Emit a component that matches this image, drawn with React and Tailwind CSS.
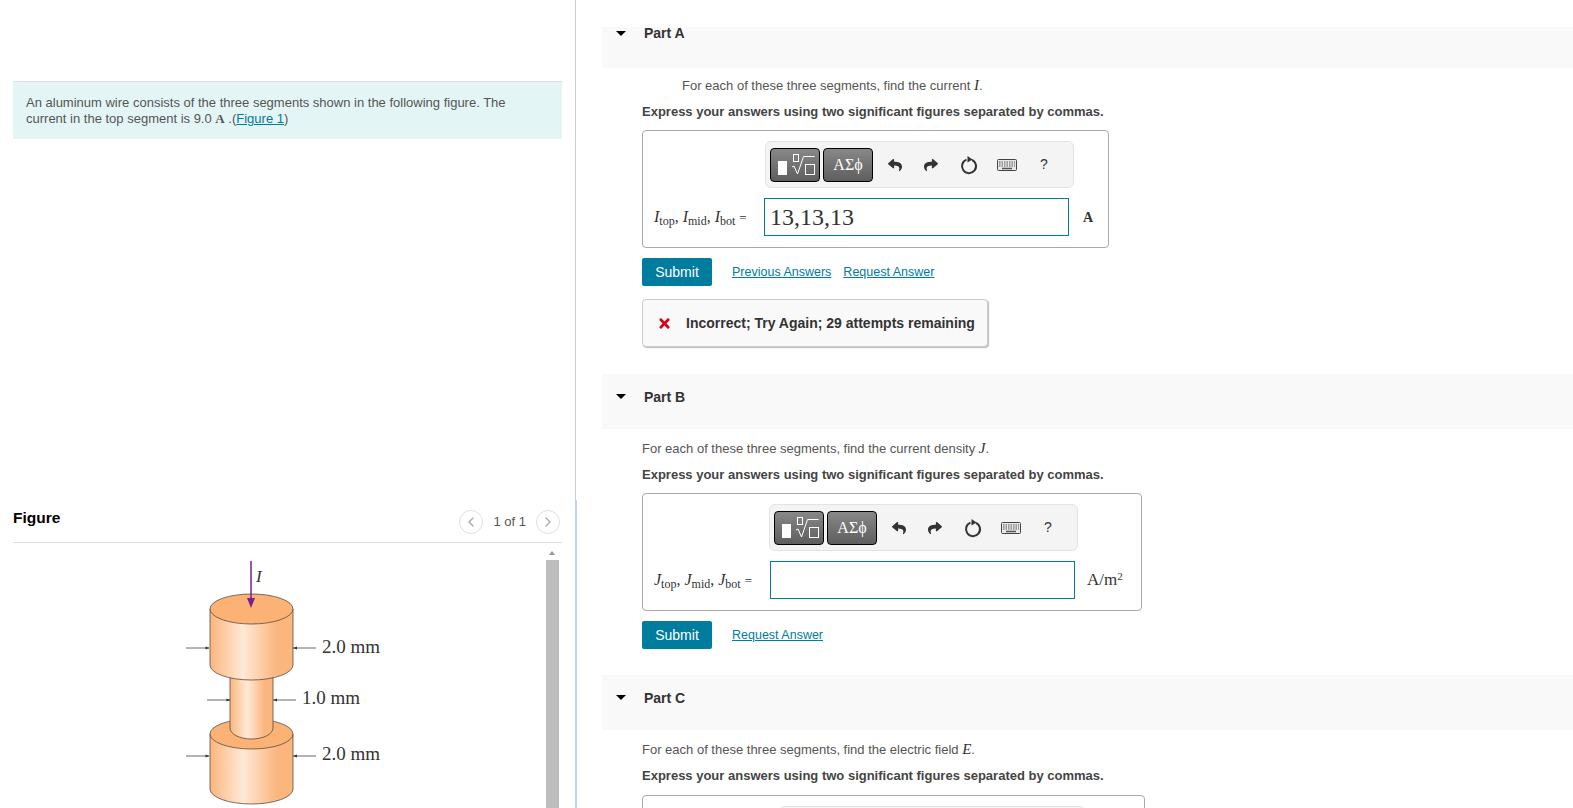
import { ChevronLeft, ChevronRight } from 'lucide-react';
import { FaReply, FaShare, FaTimes } from 'react-icons/fa';

function Var({ children }) {
  return <i className="font-['Liberation_Serif',serif] text-[15px] text-[#333]">{children}</i>;
}

function Caret() {
  return <div className="w-0 h-0 border-x-[5px] border-t-[5px] border-x-transparent border-t-black" />;
}

function PartHeader({ title, h, pt, mt, titleMt = '' }) {
  return (
    <div className={`flex items-start bg-[#f9f9f9] pl-[14px] ${h} ${pt} ${mt}`}>
      <div className="mt-[4px]"><Caret /></div>
      <span className={`ml-[18px] text-[14px] leading-[15px] font-bold text-[#333] ${titleMt}`}>{title}</span>
    </div>
  );
}

function Keyboard() {
  return (
    <svg width="20" height="12" viewBox="0 0 20 12">
      <rect x="0.5" y="0.5" width="19" height="11" rx="1" fill="#e8e8e8" stroke="#444" />
      <path d="M2 3h16M2 5h16M2 7h16" stroke="#555" strokeWidth="1" strokeDasharray="1.5 1" />
      <path d="M5 9.5h10" stroke="#555" strokeWidth="1.5" />
    </svg>
  );
}

function Reset() {
  return (
    <svg width="18" height="20" viewBox="0 0 18 20" fill="none">
      <path d="M6.5 4.6A7 7 0 1 0 12 4.8" stroke="#333" strokeWidth="2" />
      <path d="M7.5 1l5 3.5-5 3z" fill="#333" />
    </svg>
  );
}

function Toolbar({ mt }) {
  return (
    <div className={`flex items-center w-[309px] h-[47px] rounded-[6px] border border-[#e2e2e2] bg-[#f4f4f4] pl-[4px] ${mt}`}>
      <div className="flex items-center w-[50px] h-[34px] rounded-[4px] border border-black bg-gradient-to-b from-[#888] to-[#5e5e5e] pl-[7px] gap-[4px]">
        <div className="w-[9px] h-[14px] bg-white mt-[6px]" />
        <svg width="24" height="26" viewBox="0 0 24 26" fill="none" stroke="#fff" strokeWidth="1">
          <rect x="2.5" y="2.5" width="5" height="7" />
          <path d="M1 15l2-1 3.5 8 6-17.5h11" />
          <rect x="14.5" y="12.5" width="9" height="10" />
        </svg>
      </div>
      <div className="flex items-center justify-center w-[50px] h-[34px] ml-[3px] rounded-[4px] border border-black bg-gradient-to-b from-[#888] to-[#5e5e5e] font-['Liberation_Serif',serif] text-[16px] text-white">
        ΑΣϕ
      </div>
      <FaReply className="ml-[15px] text-[14px] text-[#333]" />
      <FaShare className="ml-[22px] text-[14px] text-[#333]" />
      <div className="ml-[22px]"><Reset /></div>
      <div className="ml-[19px]"><Keyboard /></div>
      <span className="ml-[23px] text-[14px] text-[#333]">?</span>
    </div>
  );
}

function Eq({ sym, w, value, unit, labelW, toolMl, gap }) {
  return (
    <div className={`flex flex-col h-[118px] rounded-[4px] border border-[#aaa] ${w}`}>
      <div className={toolMl}><Toolbar mt="mt-[10px]" /></div>
      <div className="flex items-center mt-[10px] pl-[11px]">
        <span className={`font-['Liberation_Serif',serif] text-[16px] text-[#333] whitespace-nowrap ${labelW}`}>
          <i>{sym}</i><sub className="text-[12px]">top</sub>, <i>{sym}</i><sub className="text-[12px]">mid</sub>, <i>{sym}</i><sub className="text-[12px]">bot</sub> <span className="text-[13px]">=</span>
        </span>
        <div className="flex items-center w-[305px] h-[38px] border border-[#007c9e] pl-[5px] font-['Liberation_Serif',serif] text-[24px] text-[#333]">
          {value}
        </div>
        <span className={`font-['Liberation_Serif',serif] text-[#333] ${gap}`}>{unit}</span>
      </div>
    </div>
  );
}

function SubmitRow({ links, mt }) {
  return (
    <div className={`flex items-center ${mt}`}>
      <button className="w-[70px] h-[28px] rounded-[2px] bg-[#007c9e] text-[14px] text-white">Submit</button>
      <div className="flex ml-[20px] gap-[12px]">
        {links.map((l) => (
          <a key={l} className="text-[12.5px] text-[#007c9e] underline">{l}</a>
        ))}
      </div>
    </div>
  );
}

function Wire() {
  const grad = 'url(#seg)';
  return (
    <svg width="220" height="253" viewBox="170 555 220 253" className="mx-auto shrink-0">
      <defs>
        <linearGradient id="seg" x1="0" x2="1" y1="0" y2="0">
          <stop offset="0" stopColor="#fbb67e" />
          <stop offset="0.4" stopColor="#ffe9d6" />
          <stop offset="0.8" stopColor="#fbb67e" />
          <stop offset="1" stopColor="#fbb67e" />
        </linearGradient>
      </defs>
      <g stroke="#5b4a3c" strokeWidth="0.8">
        <path d="M210 733v55a41.5 15 0 0 0 83 0v-55z" fill={grad} />
        <ellipse cx="251.5" cy="733" rx="41.5" ry="15" fill="#fbb274" />
        <path d="M230 660v67a21.5 11 0 0 0 43 0v-67z" fill={grad} />
        <path d="M210 608v56a41.5 15 0 0 0 83 0v-56z" fill={grad} />
        <ellipse cx="251.5" cy="608" rx="41.5" ry="15" fill="#fbb274" />
      </g>
      <g stroke="#444" strokeWidth="0.8" fill="none">
        <path d="M186 647h23M293 647h23M207 699h23M273 699h23M186 755h23M293 755h23" />
      </g>
      <g fill="#333">
        <path d="M209.5 647l-4 -1.5v3zM293 647l4 -1.5v3zM230.5 699l-4 -1.5v3zM273 699l4 -1.5v3zM209.5 755l-4 -1.5v3zM293 755l4 -1.5v3z" />
      </g>
      <path d="M251 560v40" stroke="#7b1f8f" strokeWidth="1.5" />
      <path d="M247 597h8l-4 10z" fill="#7b1f8f" />
      <g fontFamily="Liberation Serif, serif" fill="#333" fontSize="19">
        <text x="256" y="581" fontStyle="italic" fontSize="17">I</text>
        <text x="322" y="652">2.0 mm</text>
        <text x="302" y="703">1.0 mm</text>
        <text x="322" y="759">2.0 mm</text>
      </g>
    </svg>
  );
}

function LeftPanel() {
  return (
    <div className="flex flex-col w-[575px] shrink-0 h-full pl-[13px] pr-[13px] pt-[81px]">
      <div className="h-[58px] bg-[#e4f5f6] border-t border-[#d5e3e6] px-[13px] pt-[13px] text-[13px] leading-[16px] text-[#555]">
        An aluminum wire consists of the three segments shown in the following figure. The<br />
        current in the top segment is 9.0 <span className="font-['Liberation_Serif',serif] font-bold">A</span> .(<a className="text-[#007c9e] underline">Figure 1</a>)
      </div>
      <div className="flex items-center justify-between h-[44px] mt-[360px] border-b border-[#ddd] pb-[3px]">
        <span className="text-[15.5px] font-bold text-black mt-[-2px]">Figure</span>
        <div className="flex items-center gap-[10px] mt-[6px] mr-[2px] text-[13px] text-[#555]">
          <span className="flex items-center justify-center w-[24px] h-[24px] rounded-full border border-[#e0e0e0]"><ChevronLeft size={16} className="text-[#aaa]" /></span>
          <span>1 of 1</span>
          <span className="flex items-center justify-center w-[24px] h-[24px] rounded-full border border-[#e0e0e0]"><ChevronRight size={16} className="text-[#aaa]" /></span>
        </div>
      </div>
      <div className="flex flex-1 min-h-0">
        <div className="flex-1 pt-[13px] pl-[1px] overflow-hidden"><Wire /></div>
        <div className="flex flex-col items-center w-[14px] mr-[3px] mt-[3px]">
          <div className="mt-[5px] mb-[5px] w-0 h-0 border-x-[3px] border-b-[4px] border-x-transparent border-b-[#999]" />
          <div className="flex-1 w-[13px] bg-[#bdbdbd]" />
        </div>
      </div>
    </div>
  );
}

export default function App() {
  return (
    <div className="flex h-screen overflow-hidden bg-white font-['Liberation_Sans',sans-serif]">
      <LeftPanel />
      <div className="flex flex-col shrink-0 w-[2px]">
        <div className="h-[500px] w-px bg-[#ccc]" />
        <div className="flex-1 bg-[#c3d3ea]" />
      </div>
      <div className="flex-1 min-w-0 pl-[25px] pt-[27px]">
        <PartHeader title="Part A" h="h-[41px]" pt="pt-0" mt="mt-0" titleMt="-mt-[1px]" />
        <div className="pl-[40px]">
          <p className="mt-[8px] ml-[40px] text-[13px] leading-[18px] text-[#555]">For each of these three segments, find the current <Var>I</Var>.</p>
          <p className="mt-[8px] text-[13px] leading-[18px] font-bold text-[#444]">Express your answers using two significant figures separated by commas.</p>
          <div className="mt-[9px]">
            <Eq sym="I" w="w-[467px]" value="13,13,13" unit="A" labelW="w-[110px]" toolMl="ml-[122px]" gap="ml-[14px] text-[14px] font-bold" />
          </div>
          <SubmitRow links={['Previous Answers', 'Request Answer']} mt="mt-[10px]" />
          <div className="flex items-center w-[346px] h-[48px] mt-[13px] rounded-[4px] border border-[#ccc] bg-[#f9f9f9] shadow-[1px_1px_1px_#bbb] pl-[14px]">
            <FaTimes className="text-[15px] text-[#d9001b]" />
            <span className="ml-[14px] text-[14px] font-bold text-[#333]">Incorrect; Try Again; 29 attempts remaining</span>
          </div>
        </div>
        <PartHeader title="Part B" h="h-[55px]" pt="pt-[16px]" mt="mt-[27px]" />
        <div className="pl-[40px]">
          <p className="mt-[10px] text-[13px] leading-[18px] text-[#555]">For each of these three segments, find the current density <Var>J</Var>.</p>
          <p className="mt-[8px] text-[13px] leading-[18px] font-bold text-[#444]">Express your answers using two significant figures separated by commas.</p>
          <div className="mt-[9px]">
            <Eq sym="J" w="w-[500px]" value="" unit={<span>A/m<sup className="text-[11px]">2</sup></span>} labelW="w-[116px]" toolMl="ml-[126px]" gap="ml-[12px] text-[17px]" />
          </div>
          <SubmitRow links={['Request Answer']} mt="mt-[10px]" />
        </div>
        <PartHeader title="Part C" h="h-[55px]" pt="pt-[16px]" mt="mt-[26px]" />
        <div className="pl-[40px]">
          <p className="mt-[10px] text-[13px] leading-[18px] text-[#555]">For each of these three segments, find the electric field <Var>E</Var>.</p>
          <p className="mt-[8px] text-[13px] leading-[18px] font-bold text-[#444]">Express your answers using two significant figures separated by commas.</p>
          <div className="mt-[10px] w-[503px] h-[118px] rounded-[4px] border border-[#aaa] pl-[136px] pt-[10px]">
            <div className="w-[307px] h-[48px] rounded-[6px] border border-[#e2e2e2] bg-[#f4f4f4]" />
          </div>
        </div>
      </div>
    </div>
  );
}
